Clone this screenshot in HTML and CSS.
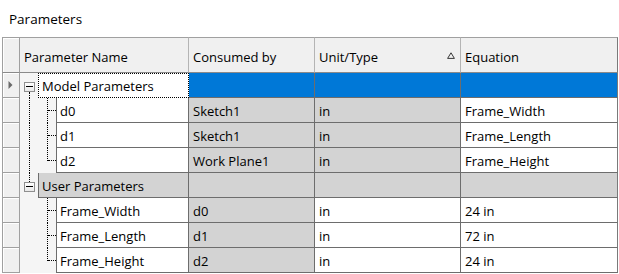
FILE: index.html
```html
<!DOCTYPE html>
<html lang="en">
<head>
  <meta charset="UTF-8" />
  <title>Parameters</title>
  <link rel="stylesheet" href="styles.css">
</head>
<body>
  <div class="panel">
    <div class="title">Parameters</div>

    <div class="grid">
      <!-- header -->
      <div class="rh hd"></div>
      <div class="hd">Parameter Name</div>
      <div class="hd">Consumed by</div>
      <div class="hd sorted">
        <span>Unit/Type</span>
        <svg class="sort" width="8" height="7" viewBox="0 0 8 7"><path d="M4 0.8 L7.4 6.4 L0.6 6.4 Z" fill="none" stroke="#222" stroke-width="0.9"/></svg>
      </div>
      <div class="hd last">Equation</div>

      <!-- Model Parameters -->
      <div class="rh current">
        <svg width="5" height="8" viewBox="0 0 5 8"><path d="M0.5 0 L4.5 4 L0.5 8 Z" fill="#6a6a6a"/></svg>
      </div>
      <div class="name focus">
        <span class="indent open-down"><span class="expander"></span></span>
        <span class="label">Model Parameters</span>
      </div>
      <div class="cell sel"></div>
      <div class="cell sel"></div>
      <div class="cell sel last"></div>

      <div class="rh"></div>
      <div class="name">
        <span class="indent through"></span>
        <span class="indent branch"></span>
        <span class="label">d0</span>
      </div>
      <div class="cell ro">Sketch1</div>
      <div class="cell ro">in</div>
      <div class="cell last">Frame_Width</div>

      <div class="rh"></div>
      <div class="name">
        <span class="indent through"></span>
        <span class="indent branch"></span>
        <span class="label">d1</span>
      </div>
      <div class="cell ro">Sketch1</div>
      <div class="cell ro">in</div>
      <div class="cell last">Frame_Length</div>

      <div class="rh"></div>
      <div class="name">
        <span class="indent through"></span>
        <span class="indent branch end"></span>
        <span class="label">d2</span>
      </div>
      <div class="cell ro">Work Plane1</div>
      <div class="cell ro">in</div>
      <div class="cell last">Frame_Height</div>

      <!-- User Parameters -->
      <div class="rh"></div>
      <div class="name">
        <span class="indent open-up"><span class="expander"></span></span>
        <span class="label ro">User Parameters</span>
      </div>
      <div class="cell ro"></div>
      <div class="cell ro"></div>
      <div class="cell ro last"></div>

      <div class="rh"></div>
      <div class="name">
        <span class="indent"></span>
        <span class="indent branch"></span>
        <span class="label">Frame_Width</span>
      </div>
      <div class="cell ro">d0</div>
      <div class="cell">in</div>
      <div class="cell last">24 in</div>

      <div class="rh"></div>
      <div class="name">
        <span class="indent"></span>
        <span class="indent branch"></span>
        <span class="label">Frame_Length</span>
      </div>
      <div class="cell ro">d1</div>
      <div class="cell">in</div>
      <div class="cell last">72 in</div>

      <div class="rh"></div>
      <div class="name">
        <span class="indent"></span>
        <span class="indent branch end"></span>
        <span class="label">Frame_Height</span>
      </div>
      <div class="cell ro">d2</div>
      <div class="cell">in</div>
      <div class="cell last">24 in</div>
    </div>
  </div>
</body>
</html>
```

FILE: styles.css
```css
* {
  box-sizing: border-box;
  margin: 0;
  padding: 0;
}

body {
  background: #fff;
  font-family: 'Open Sans', 'Noto Sans', sans-serif;
  font-size: 13px;
  color: #000;
}

.title {
  height: 37px;
  padding: 9px 0 0 9px;
  line-height: 20px;
  font-size: 13.5px;
}

.grid {
  display: grid;
  grid-template-columns: 18px 169px 126px 146px 157px;
  grid-template-rows: 36px repeat(8, 25px);
  margin-left: 2px;
  white-space: nowrap;
}

/* header */
.hd {
  background: #f0f0f0;
  border-top: 1px solid #a0a0a0;
  border-right: 1px solid #b4b4b4;
  border-bottom: 1px solid #8a8a8a;
  display: flex;
  align-items: center;
  padding: 3px 4px 0;
}

.hd.last {
  border-right-color: #7a7a7a;
}

.sorted {
  justify-content: space-between;
  padding-right: 5px;
}

.sort {
  margin-top: -3px;
}

/* row headers */
.rh {
  background: #f0f0f0;
  border-left: 1px solid #a0a0a0;
  border-right: 1px solid #a0a0a0;
  border-bottom: 1px solid #a0a0a0;
  box-shadow: inset 1px 1px #fff;
  display: flex;
  align-items: center;
  padding-left: 5px;
}

.rh.hd {
  border-bottom-color: #8a8a8a;
  padding: 0;
}

/* body cells */
.cell {
  background: #fff;
  border-right: 1px solid #6d6d6d;
  border-bottom: 1px solid #6d6d6d;
  display: flex;
  align-items: center;
  padding: 2px 4px 0;
}

.cell.last {
  border-right-color: #7a7a7a;
}

.ro {
  background: #d3d3d3;
}

.sel {
  background: #0078d7;
}

/* tree column */
.name {
  display: flex;
  background: #f5f5f5;
  border-right: 1px solid #6d6d6d;
}

.indent {
  position: relative;
  flex: none;
  width: 18px;
}

.label {
  flex: 1;
  display: flex;
  align-items: center;
  background: #fff;
  border-left: 1px solid #6d6d6d;
  border-bottom: 1px solid #6d6d6d;
  padding: 2px 0 0 3px;
}

.label.ro {
  background: #d3d3d3;
}

.name.focus {
  border-right: none;
}

.name.focus .label {
  border: 1px dotted #000;
  padding-top: 1px;
}

.expander {
  position: absolute;
  left: 4px;
  top: 9px;
  width: 11px;
  height: 10px;
  border: 1px solid #8f8f8f;
  background: linear-gradient(#fff, #e9e9e9);
  z-index: 1;
}

.expander::after {
  content: "";
  position: absolute;
  left: 1px;
  top: 3px;
  width: 7px;
  border-top: 1px solid #000;
}

.open-down::before,
.open-up::before,
.through::before,
.branch::before {
  content: "";
  position: absolute;
  left: 9px;
  border-left: 1px dotted #000;
}

.open-down::before {
  top: 19px;
  bottom: 0;
}

.open-up::before {
  top: 0;
  height: 9px;
}

.through::before,
.branch::before {
  top: 0;
  bottom: 0;
}

.branch.end::before {
  bottom: auto;
  height: 13px;
}

.branch::after {
  content: "";
  position: absolute;
  left: 10px;
  right: 0;
  top: 12px;
  border-top: 1px dotted #000;
}
```
